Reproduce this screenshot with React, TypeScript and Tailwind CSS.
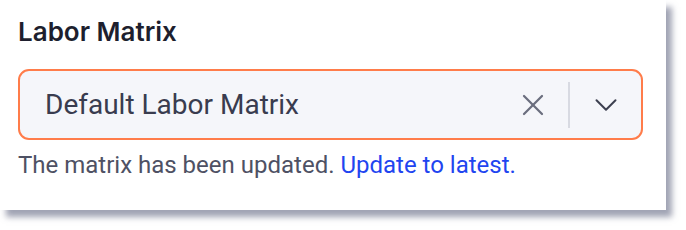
import { X, ChevronDown } from "lucide-react";

export default function App() {
  return (
    <div className="w-[686px] h-[230px] bg-white">
      <div className="w-[666px] h-[210px] bg-white shadow-[6px_7px_6px_rgba(130,134,155,0.75)] pl-[18px] pr-[23px] pt-[16px] font-['Roboto',sans-serif]">
        <h2 className="font-['Inter',sans-serif] text-[26px] leading-[32px] font-semibold text-[#1e1f2e]">
          Labor Matrix
        </h2>

        {/* select box */}
        <div className="mt-[21px] h-[71px] flex items-center rounded-[11px] border-2 border-[#ff7c4a] bg-[#f5f6fa]">
          <span className="flex-1 pl-[25px] text-[28px] leading-[34px] text-[#393c4f]">Default Labor Matrix</span>
          <button type="button" className="w-[36px] h-[36px] flex items-center justify-center text-[#6b6e7e]">
            <X size={36} strokeWidth={1.5} />
          </button>
          <div className="ml-[17px] w-[2px] h-[46px] bg-[#d8dae2]" />
          <button type="button" className="w-[71px] flex items-center justify-center text-[#3d4050]">
            <ChevronDown size={38} strokeWidth={1.25} />
          </button>
        </div>

        <p className="mt-[11px] text-[24px] leading-[28px] text-[#4e5164]">
          The matrix has been updated.{" "}
          <a href="#" className="text-[#1f45f0]">
            Update to latest.
          </a>
        </p>
      </div>
    </div>
  );
}
